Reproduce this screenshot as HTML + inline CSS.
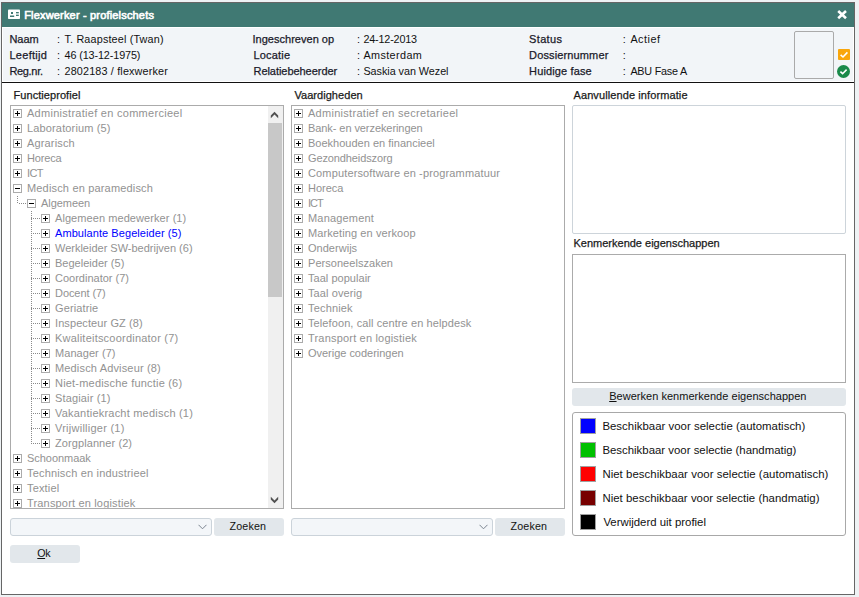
<!DOCTYPE html>
<html><head><meta charset="utf-8">
<style>
*{box-sizing:border-box;margin:0;padding:0}
html,body{width:859px;height:597px;overflow:hidden;background:#eef2f4;font-family:"Liberation Sans",sans-serif;position:relative}
.a{position:absolute;white-space:nowrap}
#win{position:absolute;left:1px;top:2px;width:854px;height:593px;border:1px solid #666;background:#fff}
#title{position:absolute;left:2px;top:3px;width:852px;height:24px;background:#407973}
#hdr{position:absolute;left:3px;top:28px;width:850px;height:53px;background:#f2f5f8}
#sep{position:absolute;left:2px;top:82px;width:852px;height:1px;background:#111}
.ttl{font-size:11px;color:#fff;-webkit-text-stroke:0.6px #fff}
.lbl{font-size:11px;color:#1a1a2a;-webkit-text-stroke:0.25px #1a1a2a}
.val{font-size:10.8px;color:#111}
.sh{font-size:11px;color:#1a1a1a;-webkit-text-stroke:0.25px #1a1a1a}
.list{position:absolute;border:1px solid #ababab;background:#fff;overflow:hidden}
.ti{position:absolute;font-size:11px;color:#929292;white-space:nowrap}
.pb{position:absolute;width:9px;height:9px;border:1px solid #ababab;background:#fff}
.pb:before{content:"";position:absolute;left:1px;top:3px;width:5px;height:1px;background:#000}
.pb.p:after{content:"";position:absolute;left:3px;top:1px;width:1px;height:5px;background:#000}
.combo{position:absolute;border:1px solid #cbd3da;background:#f3f6f9;border-radius:3px}
.btn{position:absolute;background:#e2e7eb;border-radius:3px}
.bt{font-size:10.7px;color:#111}
.box{position:absolute;border:1px solid #cdd4da;border-radius:3px;background:#fff}
.sq{position:absolute;width:16px;height:16px;border:1px solid #a0a0a0}
.lg{font-size:11.4px;color:#111}
u{text-underline-offset:1px;text-decoration-thickness:1px}

</style></head><body>
<div id="win"></div><div id="title"></div><div id="hdr"></div><div id="sep"></div>
<svg class="a" style="left:0px;top:0px" width="30" height="30" viewBox="0 0 30 30">
<rect x="8" y="9.4" width="12" height="9.7" rx="0.8" fill="#fff"/>
<rect x="11" y="12" width="2" height="2" fill="#407973"/>
<rect x="10" y="15.5" width="4.2" height="1.5" fill="#407973"/>
<rect x="16" y="12" width="2.8" height="1" fill="#407973"/>
<rect x="16" y="13" width="2.8" height="2" fill="#407973" opacity=".35"/>
<rect x="16" y="15" width="2.8" height="1" fill="#407973"/>
</svg>
<div class="a ttl" style="left:24.2px;top:6.99px;line-height:16px;letter-spacing:0.176px;">Flexwerker - profielschets</div>
<svg class="a" style="left:836px;top:9px" width="12" height="12" viewBox="0 0 12 12">
<path d="M2.2 2 L10 9.2 M10 2 L2.2 9.2" stroke="#fff" stroke-width="2.6" stroke-linecap="butt"/></svg>
<div class="a lbl" style="left:9.4px;top:31.19px;line-height:16px;letter-spacing:-0.033px;">Naam</div>
<div class="a val" style="left:57.0px;top:31.26px;line-height:16px;">:</div>
<div class="a val" style="left:64.5px;top:31.26px;line-height:16px;letter-spacing:0.167px;">T. Raapsteel (Twan)</div>
<div class="a lbl" style="left:9.4px;top:47.19px;line-height:16px;letter-spacing:0.3px;">Leeftijd</div>
<div class="a val" style="left:57.0px;top:47.26px;line-height:16px;">:</div>
<div class="a val" style="left:64.5px;top:47.26px;line-height:16px;letter-spacing:-0.107px;">46 (13-12-1975)</div>
<div class="a lbl" style="left:9.4px;top:62.89px;line-height:16px;letter-spacing:-0.317px;">Reg.nr.</div>
<div class="a val" style="left:57.0px;top:62.96px;line-height:16px;">:</div>
<div class="a val" style="left:64.5px;top:62.96px;line-height:16px;letter-spacing:0.163px;">2802183 / flexwerker</div>
<div class="a lbl" style="left:252.5px;top:31.19px;line-height:16px;letter-spacing:0.021px;">Ingeschreven op</div>
<div class="a val" style="left:357.0px;top:31.26px;line-height:16px;">:</div>
<div class="a val" style="left:363.4px;top:31.26px;line-height:16px;letter-spacing:-0.167px;">24-12-2013</div>
<div class="a lbl" style="left:253.5px;top:47.19px;line-height:16px;letter-spacing:0.183px;">Locatie</div>
<div class="a val" style="left:357.0px;top:47.26px;line-height:16px;">:</div>
<div class="a val" style="left:363.4px;top:47.26px;line-height:16px;letter-spacing:0.4px;">Amsterdam</div>
<div class="a lbl" style="left:253.5px;top:62.89px;line-height:16px;letter-spacing:-0.047px;">Relatiebeheerder</div>
<div class="a val" style="left:357.0px;top:62.96px;line-height:16px;">:</div>
<div class="a val" style="left:363.4px;top:62.96px;line-height:16px;letter-spacing:-0.033px;">Saskia van Wezel</div>
<div class="a lbl" style="left:529.1px;top:31.19px;line-height:16px;letter-spacing:0.32px;">Status</div>
<div class="a val" style="left:622.8px;top:31.26px;line-height:16px;">:</div>
<div class="a val" style="left:630.4px;top:31.26px;line-height:16px;letter-spacing:0.52px;">Actief</div>
<div class="a lbl" style="left:529.1px;top:47.19px;line-height:16px;letter-spacing:0.133px;">Dossiernummer</div>
<div class="a val" style="left:622.8px;top:47.26px;line-height:16px;">:</div>
<div class="a lbl" style="left:529.1px;top:62.89px;line-height:16px;letter-spacing:0.127px;">Huidige fase</div>
<div class="a val" style="left:622.8px;top:62.96px;line-height:16px;">:</div>
<div class="a val" style="left:630.4px;top:62.96px;line-height:16px;letter-spacing:-0.222px;">ABU Fase A</div>
<div class="a" style="left:794px;top:31px;width:40px;height:48px;border:1px solid #aaaaaa;border-radius:2px;background:#f2f5f8"></div>
<svg class="a" style="left:838px;top:49px" width="12" height="11" viewBox="0 0 12 11">
<rect x="0" y="0" width="12" height="11" rx="1" fill="#f9a60c"/>
<path d="M2.6 5.8 L5 8 L9.4 3.4" stroke="#fff" stroke-width="1.6" fill="none"/></svg>
<svg class="a" style="left:837.2px;top:65px" width="13" height="13" viewBox="0 0 13 13">
<circle cx="6.5" cy="6.5" r="6.5" fill="#1a8a4a"/>
<path d="M3.4 6.6 L5.6 8.7 L9.6 4.6" stroke="#fff" stroke-width="1.6" fill="none"/></svg>
<div class="a sh" style="left:13.5px;top:86.89px;line-height:16px;letter-spacing:0.062px;">Functieprofiel</div>
<div class="a sh" style="left:294.4px;top:86.99px;line-height:16px;letter-spacing:0.055px;">Vaardigheden</div>
<div class="a sh" style="left:573.5px;top:87.19px;line-height:16px;letter-spacing:0.1px;">Aanvullende informatie</div>
<div class="a sh" style="left:573.5px;top:235.19px;line-height:16px;letter-spacing:0.0px;">Kenmerkende eigenschappen</div>
<div class="list" style="left:10px;top:105px;width:274px;height:404px"></div>
<div class="a" style="left:11px;top:106px;width:257px;height:402px;overflow:hidden">
<div class="pb p" style="left:2px;top:3px"></div>
<div class="ti" style="left:16px;top:-0.81px;line-height:16px;letter-spacing:0.279px;">Administratief en commercieel</div>
<div class="pb p" style="left:2px;top:18px"></div>
<div class="ti" style="left:16px;top:14.19px;line-height:16px;letter-spacing:0.147px;">Laboratorium (5)</div>
<div class="pb p" style="left:2px;top:33px"></div>
<div class="ti" style="left:16px;top:29.19px;line-height:16px;letter-spacing:0.150px;">Agrarisch</div>
<div class="pb p" style="left:2px;top:48px"></div>
<div class="ti" style="left:16px;top:44.19px;line-height:16px;letter-spacing:-0.160px;">Horeca</div>
<div class="pb p" style="left:2px;top:63px"></div>
<div class="ti" style="left:16px;top:59.19px;line-height:16px;letter-spacing:-0.600px;">ICT</div>
<div class="pb m" style="left:2px;top:78px"></div>
<div class="ti" style="left:16px;top:74.19px;line-height:16px;letter-spacing:0.171px;">Medisch en paramedisch</div>
<div class="pb m" style="left:16px;top:93px"></div>
<div class="ti" style="left:30px;top:89.19px;line-height:16px;letter-spacing:-0.057px;">Algemeen</div>
<div class="pb p" style="left:30px;top:108px"></div>
<div class="ti" style="left:44px;top:104.19px;line-height:16px;letter-spacing:0.073px;">Algemeen medewerker (1)</div>
<div class="pb p" style="left:30px;top:123px"></div>
<div class="ti" style="left:44px;top:119.19px;line-height:16px;letter-spacing:0.070px;color:#0000ff">Ambulante Begeleider (5)</div>
<div class="pb p" style="left:30px;top:138px"></div>
<div class="ti" style="left:44px;top:134.19px;line-height:16px;letter-spacing:-0.008px;">Werkleider SW-bedrijven (6)</div>
<div class="pb p" style="left:30px;top:153px"></div>
<div class="ti" style="left:44px;top:149.19px;line-height:16px;letter-spacing:0.016px;">Begeleider (5)</div>
<div class="pb p" style="left:30px;top:168px"></div>
<div class="ti" style="left:44px;top:164.19px;line-height:16px;letter-spacing:0.000px;">Coordinator (7)</div>
<div class="pb p" style="left:30px;top:183px"></div>
<div class="ti" style="left:44px;top:179.19px;line-height:16px;letter-spacing:-0.067px;">Docent (7)</div>
<div class="pb p" style="left:30px;top:198px"></div>
<div class="ti" style="left:44px;top:194.19px;line-height:16px;letter-spacing:0.126px;">Geriatrie</div>
<div class="pb p" style="left:30px;top:213px"></div>
<div class="ti" style="left:44px;top:209.19px;line-height:16px;letter-spacing:0.087px;">Inspecteur GZ (8)</div>
<div class="pb p" style="left:30px;top:228px"></div>
<div class="ti" style="left:44px;top:224.19px;line-height:16px;letter-spacing:0.216px;">Kwaliteitscoordinator (7)</div>
<div class="pb p" style="left:30px;top:243px"></div>
<div class="ti" style="left:44px;top:239.19px;line-height:16px;letter-spacing:0.060px;">Manager (7)</div>
<div class="pb p" style="left:30px;top:258px"></div>
<div class="ti" style="left:44px;top:254.19px;line-height:16px;letter-spacing:0.158px;">Medisch Adviseur (8)</div>
<div class="pb p" style="left:30px;top:273px"></div>
<div class="ti" style="left:44px;top:269.19px;line-height:16px;letter-spacing:0.200px;">Niet-medische functie (6)</div>
<div class="pb p" style="left:30px;top:288px"></div>
<div class="ti" style="left:44px;top:284.19px;line-height:16px;letter-spacing:0.145px;">Stagiair (1)</div>
<div class="pb p" style="left:30px;top:303px"></div>
<div class="ti" style="left:44px;top:299.19px;line-height:16px;letter-spacing:0.216px;">Vakantiekracht medisch (1)</div>
<div class="pb p" style="left:30px;top:318px"></div>
<div class="ti" style="left:44px;top:314.19px;line-height:16px;letter-spacing:0.254px;">Vrijwilliger (1)</div>
<div class="pb p" style="left:30px;top:333px"></div>
<div class="ti" style="left:44px;top:329.19px;line-height:16px;letter-spacing:0.086px;">Zorgplanner (2)</div>
<div class="pb p" style="left:2px;top:348px"></div>
<div class="ti" style="left:16px;top:344.19px;line-height:16px;letter-spacing:-0.045px;">Schoonmaak</div>
<div class="pb p" style="left:2px;top:363px"></div>
<div class="ti" style="left:16px;top:359.19px;line-height:16px;letter-spacing:0.174px;">Technisch en industrieel</div>
<div class="pb p" style="left:2px;top:378px"></div>
<div class="ti" style="left:16px;top:374.19px;line-height:16px;letter-spacing:0.167px;">Textiel</div>
<div class="pb p" style="left:2px;top:393px"></div>
<div class="ti" style="left:16px;top:389.19px;line-height:16px;letter-spacing:0.171px;">Transport en logistiek</div>
<div class="a" style="left:6px;top:90px;width:1px;height:7px;background:repeating-linear-gradient(to bottom,#8a8a8a 0 1px,transparent 1px 2px)"></div>
<div class="a" style="left:8px;top:97px;width:7px;height:1px;background:repeating-linear-gradient(to right,#8a8a8a 0 1px,transparent 1px 2px)"></div>
<div class="a" style="left:20px;top:105px;width:1px;height:233px;background:repeating-linear-gradient(to bottom,#8a8a8a 0 1px,transparent 1px 2px)"></div>
<div class="a" style="left:20px;top:112px;width:10px;height:1px;background:repeating-linear-gradient(to right,#8a8a8a 0 1px,transparent 1px 2px)"></div>
<div class="a" style="left:20px;top:127px;width:10px;height:1px;background:repeating-linear-gradient(to right,#8a8a8a 0 1px,transparent 1px 2px)"></div>
<div class="a" style="left:20px;top:142px;width:10px;height:1px;background:repeating-linear-gradient(to right,#8a8a8a 0 1px,transparent 1px 2px)"></div>
<div class="a" style="left:20px;top:157px;width:10px;height:1px;background:repeating-linear-gradient(to right,#8a8a8a 0 1px,transparent 1px 2px)"></div>
<div class="a" style="left:20px;top:172px;width:10px;height:1px;background:repeating-linear-gradient(to right,#8a8a8a 0 1px,transparent 1px 2px)"></div>
<div class="a" style="left:20px;top:187px;width:10px;height:1px;background:repeating-linear-gradient(to right,#8a8a8a 0 1px,transparent 1px 2px)"></div>
<div class="a" style="left:20px;top:202px;width:10px;height:1px;background:repeating-linear-gradient(to right,#8a8a8a 0 1px,transparent 1px 2px)"></div>
<div class="a" style="left:20px;top:217px;width:10px;height:1px;background:repeating-linear-gradient(to right,#8a8a8a 0 1px,transparent 1px 2px)"></div>
<div class="a" style="left:20px;top:232px;width:10px;height:1px;background:repeating-linear-gradient(to right,#8a8a8a 0 1px,transparent 1px 2px)"></div>
<div class="a" style="left:20px;top:247px;width:10px;height:1px;background:repeating-linear-gradient(to right,#8a8a8a 0 1px,transparent 1px 2px)"></div>
<div class="a" style="left:20px;top:262px;width:10px;height:1px;background:repeating-linear-gradient(to right,#8a8a8a 0 1px,transparent 1px 2px)"></div>
<div class="a" style="left:20px;top:277px;width:10px;height:1px;background:repeating-linear-gradient(to right,#8a8a8a 0 1px,transparent 1px 2px)"></div>
<div class="a" style="left:20px;top:292px;width:10px;height:1px;background:repeating-linear-gradient(to right,#8a8a8a 0 1px,transparent 1px 2px)"></div>
<div class="a" style="left:20px;top:307px;width:10px;height:1px;background:repeating-linear-gradient(to right,#8a8a8a 0 1px,transparent 1px 2px)"></div>
<div class="a" style="left:20px;top:322px;width:10px;height:1px;background:repeating-linear-gradient(to right,#8a8a8a 0 1px,transparent 1px 2px)"></div>
<div class="a" style="left:20px;top:337px;width:10px;height:1px;background:repeating-linear-gradient(to right,#8a8a8a 0 1px,transparent 1px 2px)"></div>
</div>
<div class="a" style="left:268px;top:106px;width:15px;height:402px;background:#f0f0f0"></div>
<div class="a" style="left:268px;top:123px;width:14px;height:174px;background:#c8c8c8"></div>
<svg class="a" style="left:0;top:0" width="859" height="597" viewBox="0 0 859 597"><path d="M270.8 115.6 L274.5 111.8 L278.2 115.6 L278.2 118.2 L274.5 114.4 L270.8 118.2 Z" fill="#505050"/><path d="M270.8 496.8 L274.5 500.6 L278.2 496.8 L278.2 499.4 L274.5 503.2 L270.8 499.4 Z" fill="#505050"/></svg>
<div class="list" style="left:291px;top:105px;width:274px;height:404px"></div>
<div class="pb p" style="left:294px;top:109px"></div>
<div class="ti" style="left:308px;top:105.19px;line-height:16px;letter-spacing:0.283px">Administratief en secretarieel</div>
<div class="pb p" style="left:294px;top:124px"></div>
<div class="ti" style="left:308px;top:120.19px;line-height:16px;letter-spacing:-0.076px">Bank- en verzekeringen</div>
<div class="pb p" style="left:294px;top:139px"></div>
<div class="ti" style="left:308px;top:135.19px;line-height:16px;letter-spacing:0.009px">Boekhouden en financieel</div>
<div class="pb p" style="left:294px;top:154px"></div>
<div class="ti" style="left:308px;top:150.19px;line-height:16px;letter-spacing:-0.114px">Gezondheidszorg</div>
<div class="pb p" style="left:294px;top:169px"></div>
<div class="ti" style="left:308px;top:165.19px;line-height:16px;letter-spacing:0.145px">Computersoftware en -programmatuur</div>
<div class="pb p" style="left:294px;top:184px"></div>
<div class="ti" style="left:308px;top:180.19px;line-height:16px;letter-spacing:0.000px">Horeca</div>
<div class="pb p" style="left:294px;top:199px"></div>
<div class="ti" style="left:308px;top:195.19px;line-height:16px;letter-spacing:-1.000px">ICT</div>
<div class="pb p" style="left:294px;top:214px"></div>
<div class="ti" style="left:308px;top:210.19px;line-height:16px;letter-spacing:0.178px">Management</div>
<div class="pb p" style="left:294px;top:229px"></div>
<div class="ti" style="left:308px;top:225.19px;line-height:16px;letter-spacing:0.095px">Marketing en verkoop</div>
<div class="pb p" style="left:294px;top:244px"></div>
<div class="ti" style="left:308px;top:240.19px;line-height:16px;letter-spacing:0.025px">Onderwijs</div>
<div class="pb p" style="left:294px;top:259px"></div>
<div class="ti" style="left:308px;top:255.19px;line-height:16px;letter-spacing:0.043px">Personeelszaken</div>
<div class="pb p" style="left:294px;top:274px"></div>
<div class="ti" style="left:308px;top:270.19px;line-height:16px;letter-spacing:0.033px">Taal populair</div>
<div class="pb p" style="left:294px;top:289px"></div>
<div class="ti" style="left:308px;top:285.19px;line-height:16px;letter-spacing:0.100px">Taal overig</div>
<div class="pb p" style="left:294px;top:304px"></div>
<div class="ti" style="left:308px;top:300.19px;line-height:16px;letter-spacing:0.172px">Techniek</div>
<div class="pb p" style="left:294px;top:319px"></div>
<div class="ti" style="left:308px;top:315.19px;line-height:16px;letter-spacing:0.094px">Telefoon, call centre en helpdesk</div>
<div class="pb p" style="left:294px;top:334px"></div>
<div class="ti" style="left:308px;top:330.19px;line-height:16px;letter-spacing:0.190px">Transport en logistiek</div>
<div class="pb p" style="left:294px;top:349px"></div>
<div class="ti" style="left:308px;top:345.19px;line-height:16px;letter-spacing:-0.024px">Overige coderingen</div>
<div class="combo" style="left:10px;top:518px;width:202px;height:18px"></div>
<svg class="a" style="left:198px;top:524px" width="9" height="6" viewBox="0 0 9 6"><path d="M0.5 0.8 L4.5 4.8 L8.5 0.8" stroke="#7a8490" stroke-width="1" fill="none"/></svg>
<div class="btn" style="left:214px;top:518px;width:70px;height:18px"></div>
<div class="a bt" style="left:229.5px;top:517.99px;line-height:16px;letter-spacing:0.16px;">Zoeken</div>
<div class="combo" style="left:291px;top:518px;width:202px;height:18px"></div>
<svg class="a" style="left:479px;top:524px" width="9" height="6" viewBox="0 0 9 6"><path d="M0.5 0.8 L4.5 4.8 L8.5 0.8" stroke="#7a8490" stroke-width="1" fill="none"/></svg>
<div class="btn" style="left:495px;top:518px;width:70px;height:18px"></div>
<div class="a bt" style="left:510.5px;top:517.99px;line-height:16px;letter-spacing:0.16px;">Zoeken</div>
<div class="btn" style="left:10px;top:545px;width:70px;height:18px"></div>
<div class="a bt" style="left:37.3px;top:545.49px;line-height:16px;letter-spacing:-0.5px;"><u>O</u>k</div>
<div class="box" style="left:572px;top:105px;width:274px;height:129px;border-radius:2px"></div>
<div class="box" style="left:572px;top:254px;width:274px;height:129px;border-color:#ababab;border-radius:0"></div>
<div class="btn" style="left:572px;top:388px;width:274px;height:18px"></div>
<div class="a bt" style="left:609.2px;top:387.99px;line-height:16px;font-size:11px;letter-spacing:0.03px"><u>B</u>ewerken kenmerkende eigenschappen</div>
<div class="box" style="left:572px;top:412px;width:274px;height:124px;border-color:#a8a8a8;border-radius:3px"></div>
<div class="sq" style="left:580px;top:418px;background:#0000ff"></div>
<div class="a lg" style="left:602.4px;top:418.05px;line-height:16px;letter-spacing:0.024px;">Beschikbaar voor selectie (automatisch)</div>
<div class="sq" style="left:580px;top:442px;background:#00c000"></div>
<div class="a lg" style="left:602.4px;top:442.05px;line-height:16px;letter-spacing:0.006px;">Beschikbaar voor selectie (handmatig)</div>
<div class="sq" style="left:580px;top:466px;background:#ff0000"></div>
<div class="a lg" style="left:602.4px;top:466.05px;line-height:16px;letter-spacing:0.044px;">Niet beschikbaar voor selectie (automatisch)</div>
<div class="sq" style="left:580px;top:490px;background:#780000"></div>
<div class="a lg" style="left:602.4px;top:490.05px;line-height:16px;letter-spacing:0.029px;">Niet beschikbaar voor selectie (handmatig)</div>
<div class="sq" style="left:580px;top:514px;background:#000000"></div>
<div class="a lg" style="left:603.4px;top:514.05px;line-height:16px;letter-spacing:0.0px;">Verwijderd uit profiel</div>
</body></html>
